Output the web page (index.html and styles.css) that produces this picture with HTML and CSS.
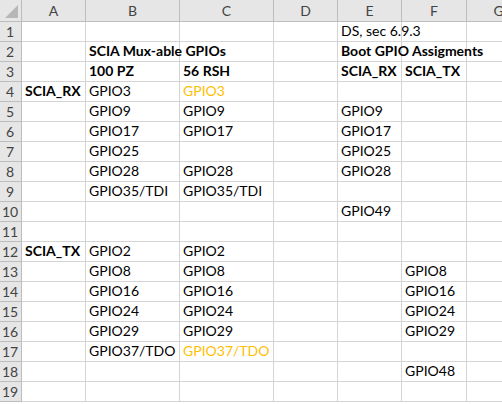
FILE: index.html
```html
<!DOCTYPE html>
<html>
<head>
<meta charset="utf-8">
<link rel="stylesheet" href="styles.css">
</head>
<body>
<div class="sheet">
  <div class="hd corner"><span class="tri"></span></div>
  <div class="hd col">A</div><div class="hd col">B</div><div class="hd col">C</div><div class="hd col">D</div><div class="hd col">E</div><div class="hd col">F</div><div class="hd col">G</div>

  <div class="hd rn">1</div><div class="c"></div><div class="c"></div><div class="c"></div><div class="c"></div><div class="c ov">DS, sec 6.9.3</div><div class="c"></div><div class="c"></div>
  <div class="hd rn">2</div><div class="c"></div><div class="c b ov">SCIA Mux-able GPIOs</div><div class="c"></div><div class="c"></div><div class="c b ov">Boot GPIO Assigments</div><div class="c"></div><div class="c"></div>
  <div class="hd rn">3</div><div class="c"></div><div class="c b">100 PZ</div><div class="c b">56 RSH</div><div class="c"></div><div class="c b">SCIA_RX</div><div class="c b">SCIA_TX</div><div class="c"></div>
  <div class="hd rn">4</div><div class="c b">SCIA_RX</div><div class="c">GPIO3</div><div class="c gold">GPIO3</div><div class="c"></div><div class="c"></div><div class="c"></div><div class="c"></div>
  <div class="hd rn">5</div><div class="c"></div><div class="c">GPIO9</div><div class="c">GPIO9</div><div class="c"></div><div class="c">GPIO9</div><div class="c"></div><div class="c"></div>
  <div class="hd rn">6</div><div class="c"></div><div class="c">GPIO17</div><div class="c">GPIO17</div><div class="c"></div><div class="c">GPIO17</div><div class="c"></div><div class="c"></div>
  <div class="hd rn">7</div><div class="c"></div><div class="c">GPIO25</div><div class="c"></div><div class="c"></div><div class="c">GPIO25</div><div class="c"></div><div class="c"></div>
  <div class="hd rn">8</div><div class="c"></div><div class="c">GPIO28</div><div class="c">GPIO28</div><div class="c"></div><div class="c">GPIO28</div><div class="c"></div><div class="c"></div>
  <div class="hd rn">9</div><div class="c"></div><div class="c">GPIO35/TDI</div><div class="c">GPIO35/TDI</div><div class="c"></div><div class="c"></div><div class="c"></div><div class="c"></div>
  <div class="hd rn">10</div><div class="c"></div><div class="c"></div><div class="c"></div><div class="c"></div><div class="c">GPIO49</div><div class="c"></div><div class="c"></div>
  <div class="hd rn">11</div><div class="c"></div><div class="c"></div><div class="c"></div><div class="c"></div><div class="c"></div><div class="c"></div><div class="c"></div>
  <div class="hd rn">12</div><div class="c b">SCIA_TX</div><div class="c">GPIO2</div><div class="c">GPIO2</div><div class="c"></div><div class="c"></div><div class="c"></div><div class="c"></div>
  <div class="hd rn">13</div><div class="c"></div><div class="c">GPIO8</div><div class="c">GPIO8</div><div class="c"></div><div class="c"></div><div class="c">GPIO8</div><div class="c"></div>
  <div class="hd rn">14</div><div class="c"></div><div class="c">GPIO16</div><div class="c">GPIO16</div><div class="c"></div><div class="c"></div><div class="c">GPIO16</div><div class="c"></div>
  <div class="hd rn">15</div><div class="c"></div><div class="c">GPIO24</div><div class="c">GPIO24</div><div class="c"></div><div class="c"></div><div class="c">GPIO24</div><div class="c"></div>
  <div class="hd rn">16</div><div class="c"></div><div class="c">GPIO29</div><div class="c">GPIO29</div><div class="c"></div><div class="c"></div><div class="c">GPIO29</div><div class="c"></div>
  <div class="hd rn">17</div><div class="c"></div><div class="c">GPIO37/TDO</div><div class="c gold">GPIO37/TDO</div><div class="c"></div><div class="c"></div><div class="c"></div><div class="c"></div>
  <div class="hd rn">18</div><div class="c"></div><div class="c"></div><div class="c"></div><div class="c"></div><div class="c"></div><div class="c">GPIO48</div><div class="c"></div>
  <div class="hd rn">19</div><div class="c"></div><div class="c"></div><div class="c"></div><div class="c"></div><div class="c"></div><div class="c"></div><div class="c"></div>
</div>
</body>
</html>
```
FILE: styles.css
```css
html, body {
  margin: 0;
  padding: 0;
  background: #ffffff;
  overflow: hidden;
}
.sheet {
  display: grid;
  grid-template-columns: 22px 64px 94px 94px 64px 64px 65px 64px;
  grid-template-rows: 22px;
  grid-auto-rows: 20px;
  font-family: Lato, "Open Sans", sans-serif;
  font-size: 14px;
  color: #000;
}
.c {
  box-sizing: border-box;
  border-right: 1px solid #d4d4d4;
  border-bottom: 1px solid #d4d4d4;
  padding: 0 3px 2px 3px;
  display: flex;
  align-items: flex-end;
  white-space: nowrap;
  line-height: 16px;
  overflow: visible;
  min-width: 0;
}
.ov {
  position: relative;
  z-index: 1;
  background: transparent;
}
.b { font-weight: bold; }
.gold { color: #ffc000; }
.hd {
  box-sizing: border-box;
  background: #e6e6e6;
  border-right: 1px solid #bdbdbd;
  border-bottom: 1px solid #bdbdbd;
  color: #444;
  display: flex;
  align-items: center;
  justify-content: center;
  font-size: 14px;
}
.rn { justify-content: center; padding-right: 1px; }
.corner { position: relative; }
.tri {
  position: absolute;
  right: 3px;
  bottom: 3px;
  width: 0;
  height: 0;
  border-left: 13px solid transparent;
  border-bottom: 13px solid #b7b7b7;
}
```
